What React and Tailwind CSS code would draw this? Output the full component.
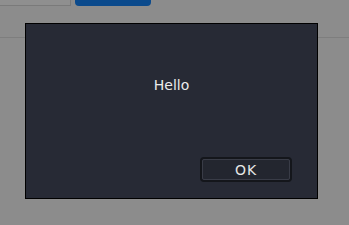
export default function App() {
  return (
    <div className="relative w-[349px] h-[225px] overflow-hidden bg-[#8c8c8c] font-['DejaVu_Sans',sans-serif]">
      {/* page behind the overlay */}
      <div className="flex items-start gap-[4px] h-[38px] border-b border-[#7e7e7e]">
        <div className="w-[71px] h-[6px] border-r border-b border-[#7a7a7a] bg-[#8f8f8f]" />
        <div className="w-[76px] h-[6px] rounded-b-[4px] bg-[#0b4a8c]" />
      </div>

      {/* dialog */}
      <div className="absolute left-[25px] top-[23px] w-[293px] h-[176px] bg-[#272a35] border border-black flex flex-col">
        <div className="flex-1 flex items-start justify-center pt-[54px]">
          <p className="text-[14px] text-[#ececec] leading-none">Hello</p>
        </div>
        <div className="flex justify-end pr-[25px] pb-[16px]">
          <button className="w-[92px] h-[25px] rounded-[4px] border-2 border-[#14161b] bg-[#23262f]">
            <span className="flex items-center justify-center w-full h-full rounded-[2px] border border-[#393c47] text-[14px] text-[#e6e6e6] tracking-[1px] leading-none">
              OK
            </span>
          </button>
        </div>
      </div>
    </div>
  );
}
